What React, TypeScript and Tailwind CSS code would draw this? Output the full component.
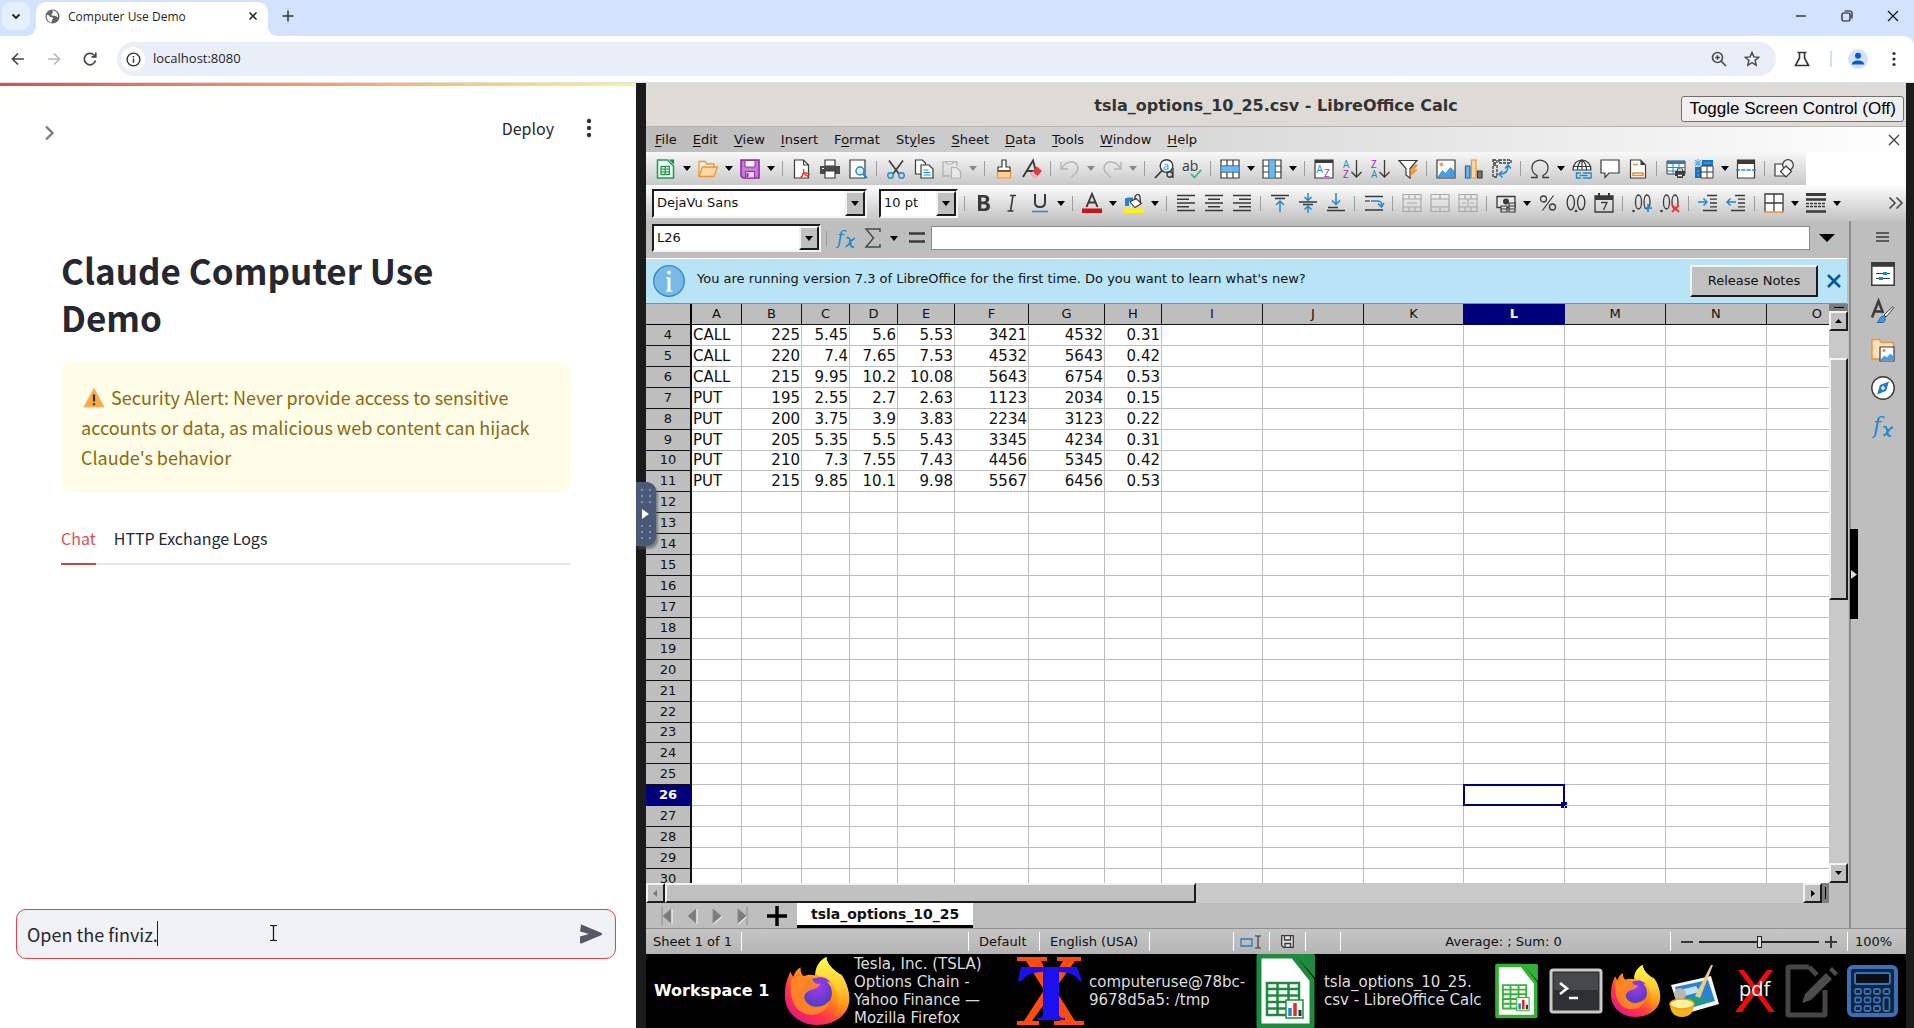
import { Fragment, type ReactNode } from 'react';

const INK = '#3a3a38';
const BLUE = '#1e8bcd';
const GREY = '#a9a9a9';

interface IconProps {
  children: ReactNode;
  size?: string;
  box?: string;
}

function Icon({ children, size = 'size-5', box = '0 0 20 20' }: IconProps) {
  return (
    <svg viewBox={box} className={`${size} shrink-0 overflow-visible`} fill="none" aria-hidden="true">
      {children}
    </svg>
  );
}

function Glyph({ x, y, size, color, children, italic, serif }: {
  x: number; y: number; size: number; color: string; children: string; italic?: boolean; serif?: boolean;
}) {
  return (
    <text
      x={x}
      y={y}
      fontSize={size}
      fill={color}
      fontStyle={italic ? 'italic' : 'normal'}
      fontFamily={serif ? 'DejaVu Serif, Liberation Serif, serif' : 'Open Sans, sans-serif'}
    >
      {children}
    </text>
  );
}

/* ---------- Toolbar icons ---------- */

const icons: Record<string, ReactNode> = {
  New: (
    <>
      <path d="M1.5 1h10l6 6v12h-16z" fill="#fff" stroke="#1e9e48" strokeWidth="1.6" />
      <path d="M13 .5h5v5z" fill="#178a3c" />
      <path d="M5 7.500h8.500v8H5zM5 10.200h8.500M5 12.800h8.500M9.200 7.500v8" stroke="#1e9e48" strokeWidth="1.300" />
    </>
  ),
  Open: (
    <>
      <path d="M1 17V2.500h6l2 2.500h7v3" fill="#fff3dc" stroke="#e8973a" strokeWidth="1.300" />
      <path d="M1 17.500 4.500 8h15L16 17.500z" fill="#fbd9a0" stroke="#e8973a" strokeWidth="1.300" />
    </>
  ),
  Save: (
    <>
      <path d="M1 1h18v18H3l-2-2z" fill="#c77bd6" stroke="#8f2da8" strokeWidth="1.600" />
      <path d="M5 1.500h10V8H5z" fill="#fff" stroke="#8f2da8" />
      <path d="M5.500 12.500h9V19h-9z" fill="#e9d2ee" stroke="#8f2da8" />
      <path d="M7.500 14v4" stroke="#8f2da8" strokeWidth="2" />
    </>
  ),
  'Export as PDF': (
    <>
      <path d="M2.500 1h9l5 5v13h-14z" fill="#fff" stroke={INK} strokeWidth="1.200" />
      <path d="M11.500 1v5h5" stroke={INK} />
      <path d="M8 19c3-2 4-6 3.500-9M10 15c2-1 5-1.500 8 .5M11.500 13c1 2 3 4 5 4.500" stroke="#e0403c" strokeWidth="1.500" />
    </>
  ),
  Print: (
    <>
      <path d="M5 1h10v6H5z" fill="#fff" stroke={INK} strokeWidth="1.200" />
      <path d="M0 7h20v8H0z" fill="#4a4a48" />
      <path d="M5 12h10v7H5z" fill="#fff" stroke={INK} strokeWidth="1.200" />
      <path d="M2 9.500h2" stroke="#fff" />
    </>
  ),
  'Print Preview': (
    <>
      <path d="M2 1h15v18H2z" fill="#fff" stroke={INK} strokeWidth="1.200" />
      <circle cx="12" cy="12" r="4" fill="#d9eefa" stroke={BLUE} strokeWidth="1.500" />
      <path d="m15 15 4 4" stroke={BLUE} strokeWidth="1.800" />
    </>
  ),
  Cut: (
    <>
      <path d="M3 1.500 13 15M17 1.500 7 15" stroke={INK} strokeWidth="1.600" />
      <circle cx="4.500" cy="16.500" r="2.700" stroke={BLUE} strokeWidth="1.400" />
      <circle cx="15.500" cy="16.500" r="2.700" stroke={BLUE} strokeWidth="1.400" />
    </>
  ),
  Copy: (
    <>
      <path d="M1.500 1h7l3 3v11h-10z" fill="#fff" stroke={INK} strokeWidth="1.200" />
      <path d="M7 6h8l4 4v9H7z" fill="#fff" stroke={INK} strokeWidth="1.200" />
      <path d="M9.500 11h5M9.500 13.500h7M9.500 16h7" stroke={BLUE} strokeWidth="1.200" />
    </>
  ),
  Paste: (
    <>
      <path d="M8 17H1V3h3M11 3h4v4" stroke="#b3b3b3" strokeWidth="1.300" />
      <path d="M4.500 5V2.500h6V5z" stroke="#b3b3b3" />
      <path d="M9.500 8.500h5l4 4V19h-9z" fill="#e9e9e9" stroke="#b3b3b3" strokeWidth="1.200" />
    </>
  ),
  'Clone Formatting': (
    <>
      <path d="M8 1h4v7h4v4H4V8h4z" fill="#fff" stroke={INK} strokeWidth="1.200" />
      <path d="M3.500 12h13v7h-13z" fill="#f9d08d" stroke="#e8973a" strokeWidth="1.200" />
      <path d="M3.500 12h13" stroke={INK} strokeWidth="1.400" />
    </>
  ),
  'Clear Formatting': (
    <>
      <path d="M1 18 11 1.500l2.500 9M5 12h8" stroke={INK} strokeWidth="1.900" />
      <path d="m8 15 7-7.500 5 4.500-6.500 7z" fill="#e5383b" />
      <path d="m8 15 2.500-2.500 5 4.500-2 2z" fill="#f6b7b8" />
    </>
  ),
  Undo: <path d="M1 3v7h7M1.500 9.500C4 5 8 2.500 12.500 3c5 .6 7 6 4 10l-5 5.500" stroke="#b5b5b5" strokeWidth="1.400" />,
  Redo: <path d="M19 3v7h-7M18.500 9.500C16 5 12 2.500 7.500 3c-5 .6-7 6-4 10l5 5.500" stroke="#b5b5b5" strokeWidth="1.400" />,
  'Find and Replace': (
    <>
      <circle cx="12.500" cy="7" r="6.300" fill="#f7fbfe" stroke={INK} strokeWidth="1.400" />
      <path d="M8 11.500 1 19" stroke={INK} strokeWidth="1.800" />
      <Glyph x={9} y={10.5} size={11} color={BLUE}>a</Glyph>
      <path d="M13 15.500a2.500 2.500 0 1 0 5.500 0 2.500 2.500 0 0 0-5.500 0M19 9v10" stroke={INK} strokeWidth="1.300" />
    </>
  ),
  Spelling: (
    <>
      <Glyph x={0} y={12} size={14} color={INK}>ab</Glyph>
      <path d="m9 15 3.500 3.500L19 11" stroke="#3cb371" strokeWidth="1.700" />
    </>
  ),
  Row: (
    <>
      <path d="M1 1h18v18H1z" fill="#fff" />
      <path d="M1 1h18v18H1zM7 1v18M13 1v18M1 7h18M1 13h18" stroke={INK} strokeWidth="1.200" />
      <path d="M1 7h18v6H1z" fill="#6fb6ea" stroke={BLUE} strokeWidth=".6" />
    </>
  ),
  Column: (
    <>
      <path d="M1 1h18v18H1z" fill="#fff" />
      <path d="M1 1h18v18H1zM7 1v18M13 1v18M1 7h18M1 13h18" stroke={INK} strokeWidth="1.200" />
      <path d="M7 1h6v18H7z" fill="#6fb6ea" stroke={BLUE} strokeWidth=".6" />
    </>
  ),
  Sort: (
    <>
      <path d="M1 1h18v18H1z" fill="#fff" stroke={INK} strokeWidth="1.200" />
      <path d="M1 1h18v3H1z" fill={INK} />
      <Glyph x={2.5} y={14} size={10} color={BLUE}>A</Glyph>
      <Glyph x={10} y={17.5} size={10} color="#a62bb8">Z</Glyph>
    </>
  ),
  'Sort Ascending': (
    <>
      <Glyph x={1} y={8.5} size={10} color={BLUE}>A</Glyph>
      <Glyph x={1} y={19} size={10} color="#a62bb8">Z</Glyph>
      <path d="M14.500 1v17M9.500 13l5 5 5-5" stroke={INK} strokeWidth="1.300" />
    </>
  ),
  'Sort Descending': (
    <>
      <Glyph x={1} y={8.5} size={10} color="#a62bb8">Z</Glyph>
      <Glyph x={1} y={19} size={10} color={BLUE}>A</Glyph>
      <path d="M14.500 1v17M9.500 13l5 5 5-5" stroke={INK} strokeWidth="1.300" />
    </>
  ),
  AutoFilter: (
    <>
      <path d="M1 1.500h18l-7 8V19l-4-3V9.500z" fill="#fff" stroke={INK} strokeWidth="1.200" />
      <path d="m17 6-6 6h3l-3 6 8-7h-3.500l4-5z" fill="#f6a13c" stroke="#e07b18" strokeWidth=".6" />
    </>
  ),
  'Insert Image': (
    <>
      <path d="M1 1h18v18H1z" fill="#fff" stroke={INK} strokeWidth="1.200" />
      <circle cx="5.500" cy="5.500" r="2" fill="#f2a44a" />
      <path d="m1.500 18.500 5-7 3 3 5-6 4 4v6z" fill="#4a9ee0" stroke={BLUE} strokeWidth=".7" />
    </>
  ),
  'Insert Chart': (
    <>
      <path d="M1.500 7h4.500v12H1.500z" fill="#6fb4e8" stroke="#1565a8" strokeWidth="1.200" />
      <path d="M7.500 1H12v18H7.500z" fill="#fbd9a0" stroke="#e8973a" strokeWidth="1.200" />
      <path d="M13.500 12H18v7h-4.500z" fill="#777" stroke={INK} strokeWidth="1.200" />
    </>
  ),
  'Pivot Table': (
    <>
      <path d="M1 1h4v3H1zM7 1h12v3H7zM1 6h4v12H1z" stroke={INK} strokeDasharray="3 1" strokeWidth="1.300" />
      <path d="M8 15c5 0 8-3 8-8M13 9.500 16 6l3 3.500M10.500 12 7 15l3.500 3.500" stroke={BLUE} strokeWidth="1.500" />
    </>
  ),
  'Special Character': (
    <path d="M1 18.500h6v-2C1 13.500.5 6 5 2.800c3-2.100 7-2.100 10 0 4.500 3.200 4 10.700-2 13.700v2h6" stroke={INK} strokeWidth="1.300" />
  ),
  Hyperlink: (
    <>
      <path d="M1 11C1 5 5 1 10 1s9 4 9 10zM10 1v10M1.500 7.500h17M10 1c-3 2-4.500 6-4.500 10M10 1c3 2 4.500 6 4.500 10" fill="#fff" stroke={INK} strokeWidth="1.200" />
      <path d="M9 14H4.500v5H9M11 14h8v5h-8M7.500 16.500h8" stroke={BLUE} strokeWidth="1.400" />
    </>
  ),
  Comment: <path d="M1 1h18v13H9l-4 4.500V14H1z" fill="#fff" stroke={INK} strokeWidth="1.200" />,
  'Headers and Footers': (
    <>
      <path d="M2.500 1h10l5 5v13h-15z" fill="#fff" stroke={INK} strokeWidth="1.200" />
      <path d="M12.500 1v5h5z" fill={INK} />
      <path d="M5 5.500h5M5 14h10v2.500H5z" stroke="#ec8a2c" strokeWidth="1.500" />
    </>
  ),
  'Define Print Area': (
    <>
      <path d="M1 2h18v13H1z" fill="#fff" stroke={INK} />
      <path d="M1 2h18v3H1z" fill="#2a7fc4" />
      <path d="M1 8.500h18M1 12h18M7 5v10M13 5v10" stroke={BLUE} />
      <path d="M11 9.500h6v2.500h2v5h-2v2h-6v-2H9v-5h2z" fill="#3f3f3d" />
      <path d="M12 11h4M12 16.500h4" stroke="#fff" strokeWidth="1.600" />
    </>
  ),
  'Freeze Rows and Columns': (
    <>
      <path d="M7 7h12v12H7z" fill="#fff" />
      <path d="M8 1h11v6H8zM1 8h6v11H1z" fill="#1673c4" />
      <path d="M7 7h12v12H7zM13 7v12M7 13h12" stroke={INK} />
      <path d="M4 0v8M0 4h8M1 1l6 6M7 1 1 7M10 4h7M3 12h2M3 16h2" stroke="#5ab0ea" strokeWidth="1.100" />
    </>
  ),
  'Split Window': (
    <>
      <path d="M1.500 1h17v18h-17z" fill="#fff" stroke={INK} strokeWidth="1.200" />
      <path d="M1.500 1h17v4h-17z" fill={INK} />
      <path d="M0 11h20" stroke={BLUE} strokeWidth="1.600" strokeDasharray="4 1.300" />
    </>
  ),
  'Draw Functions': (
    <>
      <path d="M1 5h11v12H1z" fill="#fff" stroke={INK} strokeWidth="1.200" />
      <circle cx="14" cy="6" r="5.300" fill="#f0f0f0" stroke={INK} strokeWidth="1.200" />
      <path d="m12 7 5.500 5.500-5.500 5.500-5.500-5.500z" fill="#fff" stroke={INK} strokeWidth="1.200" />
    </>
  ),
  Bold: <path d="M4 2h6c3.200 0 5.200 1.400 5.200 4 0 2-1 3.200-2.800 3.600 2.400.4 3.600 1.700 3.600 3.900 0 3-2.300 4.500-5.800 4.500H4z M7.300 4.600v4h2.400c1.500 0 2.200-.7 2.200-2s-.8-2-2.200-2zM7.300 11.200v4.200H10c1.600 0 2.500-.8 2.500-2.100 0-1.400-.9-2.100-2.500-2.100z" fill={INK} fillRule="evenodd" />,
  Italic: <path d="M8 2.500h6M5.500 18h6M11 2.500 8.500 18" stroke={INK} strokeWidth="1.600" />,
  Underline: (
    <>
      <path d="M5 1v8.500c0 3 1.800 4.500 5 4.500s5-1.500 5-4.500V1" stroke={INK} strokeWidth="2" />
      <path d="M2 18.500h16" stroke={BLUE} strokeWidth="1.500" />
    </>
  ),
  'Font Color': (
    <>
      <path d="M4.500 14 10 1l5.500 13M6.500 9.500h7" stroke={INK} strokeWidth="1.900" />
      <path d="M0 15.500h20V20H0z" fill="#c9141b" />
    </>
  ),
  'Background Color': (
    <>
      <path d="M0 15.500h20V20H0z" fill="#fdf30a" />
      <path d="M1 13V5.500c2-1.500 5-1 8-1V8H5v5z" fill="#2b7fd0" />
      <path d="m6 9 6-3.500 5.500 5-6.500 4z" fill="#fff" stroke={INK} strokeWidth="1.100" />
      <path d="M11 7c-1-5 4-8 5-3l.5 6.500" stroke={INK} strokeWidth="1.300" />
    </>
  ),
  'Align Left': <path d="M1 2.500h18M1 6.200h12M1 10h18M1 13.800h12M1 17.500h18" stroke={INK} strokeWidth="1.400" />,
  'Align Center': <path d="M1 2.500h18M4 6.200h12M1 10h18M4 13.800h12M1 17.500h18" stroke={INK} strokeWidth="1.400" />,
  'Align Right': <path d="M1 2.500h18M7 6.200h12M1 10h18M7 13.800h12M1 17.500h18" stroke={INK} strokeWidth="1.400" />,
  'Align Top': (
    <>
      <path d="M1 2.500h18M5 5.500h10" stroke={INK} strokeWidth="1.500" />
      <path d="M10 19V8M6 12l4-4 4 4" stroke={BLUE} strokeWidth="1.500" />
    </>
  ),
  'Center Vertically': (
    <>
      <path d="M1 9h18M5 11.500h10" stroke={INK} strokeWidth="1.500" />
      <path d="M10 0v7M6.500 4l3.500 3.500L13.500 4M10 20v-6.500M6.500 16.500 10 13l3.500 3.500" stroke={BLUE} strokeWidth="1.500" />
    </>
  ),
  'Align Bottom': (
    <>
      <path d="M2 14.500h10M1 17.500h18" stroke={INK} strokeWidth="1.500" />
      <path d="M10 0v11M6 7.500l4 4 4-4" stroke={BLUE} strokeWidth="1.500" />
    </>
  ),
  'Wrap Text': (
    <>
      <path d="M1 3.500h18M1 17h18" stroke={INK} strokeWidth="1.400" />
      <path d="M1 8h5" stroke={INK} strokeWidth="1.200" />
      <path d="M7 8h7c3 0 4 2 3.500 5M14 10.500l3.500 3.500L20 10" stroke={BLUE} strokeWidth="1.500" />
    </>
  ),
  'Merge and Center': <path d="M1 1.500h18v17H1zM1 6h18M1 14h18M7 1.500V6M13 1.500V6M7 14v4.500M13 14v4.500M5 10h10" stroke={GREY} strokeWidth="1.200" />,
  'Merge Cells': <path d="M1 1.500h18v17H1zM1 6h18M1 14h18M10 1.500V6M10 14v4.500" stroke={GREY} strokeWidth="1.200" />,
  'Split Cells': <path d="M1 1.500h18v17H1zM1 6h18M1 14h18M7 1.500V6M13 1.500V6M7 14v4.500M13 14v4.500M10 6v8M4 10h4M12 10h4" stroke={GREY} strokeWidth="1.200" />,
  'Format as Currency': (
    <>
      <path d="M1 3.500h18v11H1z" fill="#e9e9e9" stroke={INK} strokeWidth="1.300" />
      <circle cx="10" cy="8.500" r="3" fill={INK} />
      <path d="M5 13h6v6H5zM13 10h6v9h-6z" fill="#ddd" stroke={INK} strokeWidth="1.200" />
      <path d="M5 16h6M13 13h6M13 16h6" stroke={INK} strokeWidth="1.200" />
    </>
  ),
  'Format as Percent': (
    <>
      <circle cx="5.500" cy="6" r="3" stroke={INK} strokeWidth="1.300" />
      <circle cx="14.500" cy="14" r="3" stroke={INK} strokeWidth="1.300" />
      <path d="M15.500 2.500 4.500 17.500" stroke={INK} strokeWidth="1.200" />
    </>
  ),
  'Format as Number': (
    <>
      <ellipse cx="4.800" cy="9.500" rx="3.600" ry="7.300" stroke={INK} strokeWidth="1.300" />
      <ellipse cx="15.200" cy="9.500" rx="3.600" ry="7.300" stroke={INK} strokeWidth="1.300" />
      <circle cx="10" cy="18" r="1.300" fill={INK} />
    </>
  ),
  'Format as Date': (
    <>
      <path d="M1 3h18v16H1z" stroke={INK} strokeWidth="1.300" />
      <path d="M1 3h18v4H1zM4 0h2v4H4zM14 0h2v4h-2z" fill={INK} />
      <path d="M7 9.500h6L9.500 17" stroke={INK} strokeWidth="1.300" />
    </>
  ),
  'Add Decimal Place': (
    <>
      <ellipse cx="6.500" cy="9" rx="3" ry="7" stroke={INK} strokeWidth="1.300" />
      <ellipse cx="15" cy="9" rx="3" ry="7" stroke={INK} strokeWidth="1.300" />
      <circle cx="1.500" cy="18" r="1.300" fill={INK} />
      <path d="M16 11v8M12 15h8" stroke={BLUE} strokeWidth="1.600" />
    </>
  ),
  'Delete Decimal Place': (
    <>
      <ellipse cx="6.500" cy="9" rx="3" ry="7" stroke={INK} strokeWidth="1.300" />
      <ellipse cx="15" cy="9" rx="3" ry="7" stroke={INK} strokeWidth="1.300" />
      <circle cx="1.500" cy="18" r="1.300" fill={INK} />
      <path d="m12 12 7 7M19 12l-7 7" stroke="#e5383b" strokeWidth="1.800" />
    </>
  ),
  'Increase Indent': (
    <>
      <path d="M9 2.500h10M12 6.200h7M12 10h7M12 13.800h7M5 17.500h14" stroke={INK} strokeWidth="1.300" />
      <path d="M0 9h9M5.500 5.500 9 9l-3.500 3.500" stroke={BLUE} strokeWidth="1.500" />
    </>
  ),
  'Decrease Indent': (
    <>
      <path d="M9 2.500h10M12 6.200h7M12 10h7M12 13.800h7M5 17.500h14" stroke={INK} strokeWidth="1.300" />
      <path d="M10 9H1M4.500 5.500 1 9l3.500 3.500" stroke={BLUE} strokeWidth="1.500" />
    </>
  ),
  Borders: (
    <>
      <path d="M1 1h18v18H1z" fill="#fff" />
      <path d="M1 19V1h18v18M10 1v18M1 10h18" stroke={INK} strokeWidth="1.300" />
      <path d="M0 19h20" stroke="#e8973a" strokeWidth="1.600" />
    </>
  ),
  'Border Style': (
    <>
      <path d="M0 1.500h20" stroke={INK} strokeWidth="3" />
      <path d="M0 6.500h20M0 18.500h20" stroke={INK} strokeWidth="2.500" />
      <path d="M0 10.500h20M0 13.500h20" stroke={INK} strokeWidth="1.300" strokeDasharray="3 1" />
    </>
  ),
};

// "v" drops a menu arrow after an icon ("v-" when greyed out), "|" is a divider
const standardBar = [
  'New', 'v', 'Open', 'v', 'Save', 'v', '|', 'Export as PDF', 'Print', 'Print Preview', '|', 'Cut', 'Copy', 'Paste', 'v-',
  '|', 'Clone Formatting', 'Clear Formatting', '|', 'Undo', 'v-', 'Redo', 'v-', '|', 'Find and Replace', 'Spelling', '|',
  'Row', 'v', 'Column', 'v', '|', 'Sort', 'Sort Ascending', 'Sort Descending', 'AutoFilter', '|', 'Insert Image',
  'Insert Chart', 'Pivot Table', '|', 'Special Character', 'v', 'Hyperlink', 'Comment', 'Headers and Footers', '|',
  'Define Print Area', 'Freeze Rows and Columns', 'v', 'Split Window', '|', 'Draw Functions',
];

const formattingBar = [
  '|', 'Bold', 'Italic', 'Underline', 'v', '|', 'Font Color', 'v', 'Background Color', 'v', '|', 'Align Left',
  'Align Center', 'Align Right', '|', 'Align Top', 'Center Vertically', 'Align Bottom', '|', 'Wrap Text', '|',
  'Merge and Center', 'Merge Cells', 'Split Cells', '|', 'Format as Currency', 'v', 'Format as Percent',
  'Format as Number', 'Format as Date', '|', 'Add Decimal Place', 'Delete Decimal Place', '|', 'Increase Indent',
  'Decrease Indent', '|', 'Borders', 'v', 'Border Style', 'v',
];

function Arrow({ color = '#000' }: { color?: string }) {
  return (
    <Icon size="w-2 h-[5px]" box="0 0 8 5">
      <path d="M0 0h8L4 5z" fill={color} />
    </Icon>
  );
}

function ToolItems({ items }: { items: string[] }) {
  return (
    <>
      {items.map((item, i) => (
        <Fragment key={i}>
          {item === '|' ? (
            <span className="flex w-[10px] shrink-0 justify-center">
              <span className="h-[15px] w-px bg-[#9c9c9c]" />
            </span>
          ) : item === 'v' || item === 'v-' ? (
            <button aria-label="More options" className="flex h-5 w-[14px] shrink-0 items-center justify-center">
              <Arrow color={item === 'v' ? '#000' : '#8a8a8a'} />
            </button>
          ) : (
            <button aria-label={item} title={item} className="flex w-7 shrink-0 justify-center">
              <Icon>{icons[item]}</Icon>
            </button>
          )}
        </Fragment>
      ))}
    </>
  );
}

/* ---------- Browser chrome ---------- */

function BrowserChrome() {
  return (
    <header className="shrink-0 border-b border-[#dcdfe3] bg-[#d3e3fd] font-['Open_Sans',sans-serif] text-[#1f1f1f]">
      <div className="flex h-9 items-start pl-[2px] pt-[2px]">
        <button aria-label="Search tabs" className="flex h-7 w-7 items-center justify-center rounded-[9px] bg-[#e6effd]">
          <Icon size="size-3" box="0 0 12 12">
            <path d="m2.500 4.500 3.500 3.500 3.500-3.500" stroke="#1f1f1f" strokeWidth="1.800" />
          </Icon>
        </button>
        <div className="relative ml-[6px] flex h-[34px] w-[232px] items-center rounded-t-[10px] bg-white pb-[6px] pl-[9px] pr-[11px]">
          <svg viewBox="0 0 10 10" className="absolute -left-[10px] bottom-0 size-[10px]" aria-hidden="true">
            <path d="M10 0v10H0c6 0 10-4 10-10" fill="#fff" />
          </svg>
          <svg viewBox="0 0 10 10" className="absolute -right-[10px] bottom-0 size-[10px]" aria-hidden="true">
            <path d="M0 0v10h10C4 10 0 6 0 0" fill="#fff" />
          </svg>
          <Icon size="size-[15px]" box="0 0 16 16">
            <circle cx="8" cy="8" r="7.500" fill="#5f6368" />
            <path d="M2 6c2 0 3 1 3.500 2.500L8 9c1 .5 1 2-.5 2.500L7 14.500C3.500 14 1.200 10 2 6M7 1.800c1.500.7 2 1.700 1 2.700L6.500 6 8 7.200h3L13.800 9C14.500 5 12 1.800 8 1.500z" fill="#fff" />
          </Icon>
          <span className="ml-2 flex-1 pt-px text-xs">Computer Use Demo</span>
          <button aria-label="Close tab">
            <Icon size="size-2" box="0 0 8 8">
              <path d="m.5.5 7 7M7.500.5l-7 7" stroke="#1f1f1f" strokeWidth="1.500" />
            </Icon>
          </button>
        </div>
        <button aria-label="New tab" className="ml-[14px] flex h-7 items-center">
          <Icon size="size-3" box="0 0 12 12">
            <path d="M6 .5v11M.5 6h11" stroke="#333" strokeWidth="1.500" />
          </Icon>
        </button>
        <div className="ml-auto flex h-7 items-center gap-[34px] pr-[15px]">
          <button aria-label="Minimize">
            <Icon size="size-3" box="0 0 12 12">
              <path d="M1 6h10" stroke="#111" strokeWidth="1.200" />
            </Icon>
          </button>
          <button aria-label="Restore">
            <Icon size="size-3" box="0 0 12 12">
              <rect x="1" y="3" width="8" height="8" rx="1.500" stroke="#111" strokeWidth="1.200" />
              <path d="M3.500 1h5.500a2 2 0 0 1 2 2v5.500" stroke="#111" strokeWidth="1.200" />
            </Icon>
          </button>
          <button aria-label="Close window">
            <Icon size="size-3" box="0 0 12 12">
              <path d="m1 1 10 10M11 1 1 11" stroke="#111" strokeWidth="1.200" />
            </Icon>
          </button>
        </div>
      </div>
      <div className="flex h-[46px] items-center rounded-tr-[10px] bg-white pl-[10px] pr-[18px]">
        <button aria-label="Back" className="mr-5">
          <Icon size="size-4" box="0 0 16 16">
            <path d="M8 2.500 2.500 8 8 13.500M2.500 8H14" stroke="#474747" strokeWidth="1.700" />
          </Icon>
        </button>
        <button aria-label="Forward" className="mr-5">
          <Icon size="size-4" box="0 0 16 16">
            <path d="m8 2.500 5.500 5.500L8 13.500M13.500 8H2" stroke="#b9b9b9" strokeWidth="1.700" />
          </Icon>
        </button>
        <button aria-label="Reload" className="mr-[19px]">
          <Icon size="size-4" box="0 0 16 16">
            <path d="M13.500 9.500A5.700 5.700 0 1 1 12 4l1.500 1.500M13.800 1.500v4.300H9.500" stroke="#474747" strokeWidth="1.700" />
          </Icon>
        </button>
        <div className="flex h-[34px] flex-1 items-center rounded-full bg-[#e9eef9] pl-1 pr-4">
          <span className="flex size-6 items-center justify-center rounded-full bg-white">
            <Icon size="size-[15px]" box="0 0 16 16">
              <circle cx="8" cy="8" r="6.800" stroke="#333" strokeWidth="1.500" />
              <path d="M8 7v4.500M8 4.200v1.600" stroke="#333" strokeWidth="1.500" />
            </Icon>
          </span>
          <input aria-label="Address" defaultValue="localhost:8080" className="ml-2 flex-1 bg-transparent text-[13px] outline-none" />
          <button aria-label="Zoom" className="mr-[17px]">
            <Icon size="size-4" box="0 0 16 16">
              <circle cx="6.500" cy="6.500" r="5" stroke="#474747" strokeWidth="1.600" />
              <path d="M10 10l5 5M6.500 4.200v4.600M4.200 6.500h4.600" stroke="#474747" strokeWidth="1.600" />
            </Icon>
          </button>
          <button aria-label="Bookmark this page">
            <Icon size="size-4" box="0 0 16 16">
              <path d="m8 1.500 1.900 4.400 4.800.4-3.600 3.200 1.100 4.700L8 11.700l-4.200 2.500 1.100-4.700L1.300 6.300l4.800-.4z" stroke="#474747" strokeWidth="1.400" />
            </Icon>
          </button>
        </div>
        <button aria-label="Labs" className="ml-[18px]">
          <Icon size="size-4" box="0 0 16 16">
            <path d="M3.500 1.500h9M5.500 1.500V7l-4 7.500h13l-4-7.500V1.500" stroke="#333" strokeWidth="1.600" />
          </Icon>
        </button>
        <span className="ml-5 h-4 w-[2px] bg-[#cfe0fc]" />
        <button aria-label="Profile" className="ml-4">
          <Icon size="size-5" box="0 0 20 20">
            <circle cx="10" cy="10" r="10" fill="#d3e3fd" />
            <circle cx="10" cy="6.800" r="3" fill="#0b57d0" />
            <path d="M4 15.500c0-3 2.500-4 6-4s6 1 6 4z" fill="#0b57d0" />
          </Icon>
        </button>
        <button aria-label="Browser menu" className="ml-6">
          <Icon size="w-1 h-4" box="0 0 4 16">
            <circle cx="2" cy="2.500" r="1.600" fill="#333" />
            <circle cx="2" cy="8" r="1.600" fill="#333" />
            <circle cx="2" cy="13.500" r="1.600" fill="#333" />
          </Icon>
        </button>
      </div>
    </header>
  );
}

/* ---------- Chat pane ---------- */

function ChatPane() {
  return (
    <section className="flex w-[calc(33.333%-2px)] shrink-0 flex-col bg-white font-['Noto_Sans_CJK_SC',sans-serif] text-[#262730]">
      <div className="h-[3px] shrink-0 bg-linear-to-r from-[#e4484b] via-[#f3a068] to-[#fdf38b]" />
      <div className="flex h-[84px] shrink-0 items-center pl-10 pr-[37px]">
        <button aria-label="Open sidebar" className="mt-[10px]">
          <Icon size="size-[18px]" box="0 0 18 18">
            <path d="m6 2.500 6.500 6.500L6 15.500" stroke="#7d7e84" strokeWidth="2.400" />
          </Icon>
        </button>
        <button className="ml-auto text-base leading-6">Deploy</button>
        <button aria-label="Main menu" className="ml-[25px]">
          <Icon size="w-5 h-[18px]" box="0 0 20 18">
            <circle cx="10" cy="2" r="2.200" fill="#31333f" />
            <circle cx="10" cy="9" r="2.200" fill="#31333f" />
            <circle cx="10" cy="16" r="2.200" fill="#31333f" />
          </Icon>
        </button>
      </div>

      <div className="pl-[61px] pr-[65px] pt-[76px]">
        <h1 className="text-[35px] font-bold leading-[47px]">
          Claude Computer Use
          <br />
          Demo
        </h1>
        <div role="alert" className="mt-[22px] rounded-[10px] bg-[#fffce7] px-5 py-5 text-lg leading-[30px] text-[#8a6a12]">
          <Icon size="size-[22px] inline-block ml-[2px] mr-[6px] align-[-4px]" box="0 0 22 22">
            <path d="M11 1.500 21 20H1z" fill="#f9a94a" stroke="#f0b866" />
            <path d="M11 7.500v7M11 16.300v2" stroke="#3a3322" strokeWidth="2.200" />
          </Icon>
          Security Alert: Never provide access to sensitive accounts or data, as malicious web content can hijack Claude's behavior
        </div>
        <div role="tablist" className="mt-[21px] flex gap-[18px] border-b-2 border-[#e8e8ea] text-base leading-[50px]">
          <button role="tab" aria-selected="true" className="-mb-[2px] border-b-2 border-[#c0494c] text-[#e0504f]">
            Chat
          </button>
          <button role="tab" aria-selected="false">
            HTTP Exchange Logs
          </button>
        </div>
      </div>

      <div className="mt-auto px-4 pb-[69px] pr-5">
        <div className="relative flex h-[50px] items-center rounded-[10px] border border-[#d9474b] bg-[#f0f2f6] pl-[10px] pr-[12px]">
          <input
            aria-label="Type a message to send to Claude"
            defaultValue="Open the finviz."
            className="min-w-0 flex-1 bg-transparent pb-px text-lg leading-7 outline-none"
          />
          <span className="absolute left-[140px] top-[11px] h-[25px] w-px bg-[#222]" />
          <svg viewBox="0 0 9 18" className="absolute left-[252px] top-[14px] h-[18px] w-[9px]" fill="none" aria-hidden="true">
            <path d="M1 1.500h2.500l1 1 1-1H8M4.500 2v14M1 16.500h2.500l1-1 1 1H8" stroke="#111" strokeWidth="1.200" />
          </svg>
          <button aria-label="Send message">
            <Icon size="w-6 h-5" box="0 0 24 20">
              <path d="M2 1.500C1 .6 2 .2 3 .7l19 8c1.500.7 1.500 1.900 0 2.600l-19 8c-1 .5-2 .1-2-1v-5.800L10 10 1 7.500z" fill="#565867" />
            </Icon>
          </button>
        </div>
      </div>
    </section>
  );
}

/* ---------- LibreOffice Calc ---------- */

const menus: [string, string, string][] = [
  ['', 'F', 'ile'], ['', 'E', 'dit'], ['', 'V', 'iew'], ['', 'I', 'nsert'], ['F', 'o', 'rmat'], ['St', 'y', 'les'],
  ['', 'S', 'heet'], ['', 'D', 'ata'], ['', 'T', 'ools'], ['', 'W', 'indow'], ['', 'H', 'elp'],
];

const columns = [
  { name: 'A', width: 'w-[50px]' },
  { name: 'B', width: 'w-[60px]' },
  { name: 'C', width: 'w-[48px]' },
  { name: 'D', width: 'w-[48px]' },
  { name: 'E', width: 'w-[57px]' },
  { name: 'F', width: 'w-[74px]' },
  { name: 'G', width: 'w-[76px]' },
  { name: 'H', width: 'w-[57px]' },
  { name: 'I', width: 'w-[101px]' },
  { name: 'J', width: 'w-[101px]' },
  { name: 'K', width: 'w-[100px]' },
  { name: 'L', width: 'w-[101px]' },
  { name: 'M', width: 'w-[101px]' },
  { name: 'N', width: 'w-[101px]' },
  { name: 'O', width: 'w-[101px]' },
];

const FIRST_ROW = 4;
const LAST_ROW = 30;

const cells: Record<number, string[]> = {
  4: ['CALL', '225', '5.45', '5.6', '5.53', '3421', '4532', '0.31'],
  5: ['CALL', '220', '7.4', '7.65', '7.53', '4532', '5643', '0.42'],
  6: ['CALL', '215', '9.95', '10.2', '10.08', '5643', '6754', '0.53'],
  7: ['PUT', '195', '2.55', '2.7', '2.63', '1123', '2034', '0.15'],
  8: ['PUT', '200', '3.75', '3.9', '3.83', '2234', '3123', '0.22'],
  9: ['PUT', '205', '5.35', '5.5', '5.43', '3345', '4234', '0.31'],
  10: ['PUT', '210', '7.3', '7.55', '7.43', '4456', '5345', '0.42'],
  11: ['PUT', '215', '9.85', '10.1', '9.98', '5567', '6456', '0.53'],
};

const raised = 'border-2 border-t-[#f2f2f2] border-l-[#f2f2f2] border-r-[#1c1c1c] border-b-[#1c1c1c] bg-[#c0c0c0]';
const sunken = 'border-2 border-t-[#1c1c1c] border-l-[#1c1c1c] border-r-[#f4f4f4] border-b-[#f4f4f4] bg-white';

function ComboArrow() {
  return (
    <span className={`flex w-5 shrink-0 items-center justify-center ${raised}`}>
      <Arrow />
    </span>
  );
}

function Sheet() {
  const rows = Array.from({ length: LAST_ROW - FIRST_ROW + 1 }, (_, i) => FIRST_ROW + i);

  return (
    <div className="h-[579px] min-h-0 flex-1 overflow-hidden bg-white">
      <table className="h-[586px] w-[1222px] table-fixed border-separate border-spacing-0 text-[15px] leading-[18px] text-[#111]">
        <colgroup>
          <col className="w-[46px]" />
          {columns.map((col) => (
            <col key={col.name} className={col.width} />
          ))}
        </colgroup>
        <thead className="text-[13px]">
          <tr className="h-[21px]">
            <td className="border-b border-r-2 border-black bg-[#bebebe] p-0" />
            {columns.map((col) => (
              <th
                key={col.name}
                scope="col"
                className={
                  col.name === 'L'
                    ? 'border-b border-r border-[#00007a] bg-[#00007a] p-0 font-bold text-white'
                    : 'border-b border-r border-[#111] bg-[#bebebe] p-0 font-normal'
                }
              >
                {col.name}
              </th>
            ))}
          </tr>
        </thead>
        <tbody>
          {rows.map((row) => (
            <tr key={row} className="h-5">
              <th
                scope="row"
                className={
                  row === 26
                    ? 'border-b border-r-2 border-[#00007a] bg-[#00007a] p-0 text-[13px] font-bold text-white'
                    : 'border-b border-r-2 border-[#111] bg-[#bebebe] p-0 text-[13px] font-normal'
                }
              >
                {row}
              </th>
              {columns.map((col, c) => {
                const value = cells[row]?.[c];
                const selected = row === 26 && col.name === 'L';
                return (
                  <td
                    key={col.name}
                    className={`relative border-b border-r border-[#bdbdbd] px-px py-0 ${c === 0 ? 'text-left' : 'text-right'}`}
                  >
                    {value}
                    {selected && (
                      <span className="absolute -bottom-px -left-px -right-px -top-px border-2 border-[#00007a]">
                        <span className="absolute -bottom-1 -right-1 size-[6px] bg-[#00007a]" />
                      </span>
                    )}
                  </td>
                );
              })}
            </tr>
          ))}
        </tbody>
      </table>
    </div>
  );
}

function Calc() {
  return (
    <div className="flex min-h-0 flex-1 flex-col bg-[#bebebe] font-['DejaVu_Sans',sans-serif] text-[13px] text-[#111]">
      <div className="relative flex h-[44px] shrink-0 items-center justify-center border-b border-[#b5b3b0] bg-[#dedbd7] pt-[2px] text-base font-bold text-[#333]">
        tsla_options_10_25.csv - LibreOffice Calc
        <button className="absolute right-[2px] top-[13px] h-[26px] rounded-[3px] border border-[#6f6f6f] bg-[#efefef] px-[7px] font-['Liberation_Sans',sans-serif] text-[17px] font-normal leading-6 text-black">
          Toggle Screen Control (Off)
        </button>
      </div>

      <nav className="flex h-[25px] shrink-0 items-center gap-4 bg-linear-to-r from-[#bcbcbc] to-white pl-[9px] pr-[7px]">
        {menus.map(([before, key, after]) => (
          <button key={before + key + after}>
            {before}
            <span className="underline underline-offset-2">{key}</span>
            {after}
          </button>
        ))}
        <button aria-label="Close document" className="ml-auto">
          <Icon size="size-[10px]" box="0 0 10 10">
            <path d="m0 0 10 10M10 0 0 10" stroke="#444" strokeWidth="1.400" />
          </Icon>
        </button>
      </nav>

      <div className="flex h-[33px] shrink-0 bg-white">
        <div className="flex items-center bg-linear-to-b from-[#f8f8f8] to-[#c9c9c9] pl-[6px] pr-2">
          <ToolItems items={standardBar} />
        </div>
      </div>

      <div className="flex h-9 shrink-0 items-center overflow-hidden bg-linear-to-b from-[#fdfdfd] to-[#c3c3c3] pl-[6px]">
        <div className={`flex h-[29px] w-[215px] shrink-0 ${sunken}`}>
          <select aria-label="Font Name" className="flex-1 appearance-none pl-[3px] outline-none">
            <option>DejaVu Sans</option>
          </select>
          <ComboArrow />
        </div>
        <div className={`ml-3 mr-[2px] flex h-[29px] w-[79px] shrink-0 ${sunken}`}>
          <select aria-label="Font Size" className="w-full min-w-0 flex-1 appearance-none pl-[3px] outline-none">
            <option>10 pt</option>
          </select>
          <ComboArrow />
        </div>
        <ToolItems items={formattingBar} />
        <button aria-label="More tools" className="ml-auto pr-[3px]">
          <Icon size="w-4 h-3" box="0 0 16 12">
            <path d="m2.500.5 5.500 5.500-5.500 5.500M9.500.5 15 6l-5.500 5.500" stroke="#444" strokeWidth="1.500" />
          </Icon>
        </button>
      </div>

      <div className="flex min-h-0 flex-1">
        <div className="flex min-w-0 flex-1 flex-col">
          <div className="flex h-[37px] shrink-0 items-center pb-[3px] pl-[6px] pr-[14px]">
            <div className={`flex h-7 w-[169px] shrink-0 ${sunken}`}>
              <input aria-label="Name Box" defaultValue="L26" className="min-w-0 flex-1 pl-[3px] outline-none" />
              <ComboArrow />
            </div>
            <span className="ml-[5px] h-[15px] w-px bg-[#9c9c9c]" />
            <button aria-label="Function Wizard" className="ml-[9px]">
              <Icon>
                <Glyph x={1} y={16} size={18} color={BLUE} italic serif>f</Glyph>
                <path d="M10.500 10c2-1 3 0 3.500 2.500l1 5c.3 1.500 1.500 2 3 1M19 10.300c-2 0-3.500 2-5 4.200s-2.500 4-4.500 4" stroke={BLUE} strokeWidth="1.700" />
              </Icon>
            </button>
            <button aria-label="Select Function" className="ml-[7px]">
              <Icon>
                <path d="M17 4V1H3l7.500 9L3 19h14v-3" stroke="#4a4a48" strokeWidth="1.500" />
              </Icon>
            </button>
            <button aria-label="Function list" className="ml-[7px]">
              <Arrow />
            </button>
            <button aria-label="Formula" className="ml-[11px] mr-[6px]">
              <Icon size="w-4 h-5" box="0 0 16 20">
                <path d="M0 5.500h16M0 13.500h16" stroke={INK} strokeWidth="2.300" />
              </Icon>
            </button>
            <input aria-label="Input line" className="h-6 min-w-0 flex-1 border border-[#8a8a8a] bg-white px-1 outline-none" />
            <button aria-label="Expand Formula Bar" className="ml-[9px]">
              <Icon size="w-4 h-2" box="0 0 16 8">
                <path d="M0 0h16L8 8z" fill="#000" />
              </Icon>
            </button>
          </div>

          <div className="mr-[2px] flex h-[46px] shrink-0 items-center border-b border-t border-b-[#8a8a8a] border-t-white bg-[#b9e4f6] pl-[7px] pr-[5px]">
            <Icon size="size-8" box="0 0 32 32">
              <circle cx="16" cy="16" r="15.300" fill="#7ab8e8" stroke="#2e86cf" strokeWidth="1.300" />
              <path d="M16 12.500v14" stroke="#fff" strokeWidth="3" />
              <circle cx="16" cy="7.500" r="1.900" fill="#fff" />
              <path d="M13 13h3M13 26h6.500" stroke="#fff" />
            </Icon>
            <p className="ml-[12px] pb-1">
              You are running version 7.3 of LibreOffice for the first time. Do you want to learn what's new?
            </p>
            <button className={`ml-auto h-8 w-[128px] ${raised}`}>Release Notes</button>
            <button aria-label="Close infobar" className="ml-2">
              <Icon size="size-4" box="0 0 16 16">
                <path d="m2 2 12 12M14 2 2 14" stroke="#0a5696" strokeWidth="2.600" />
              </Icon>
            </button>
          </div>

          <div className="flex min-h-0 flex-1 pr-[1px]">
            <Sheet />
            <div className="flex w-[19px] shrink-0 flex-col bg-[#c9c9c9]">
              <span className="flex h-[7px] items-center justify-center bg-[#7d7d7d]">
                <span className="h-px w-[10px] bg-black" />
              </span>
              <button aria-label="Scroll up" className={`flex h-5 items-center justify-center ${raised}`}>
                <Icon size="w-[7px] h-1" box="0 0 7 4">
                  <path d="M0 4h7L3.500 0z" fill="#000" />
                </Icon>
              </button>
              <span className={`mt-[27px] h-[242px] ${raised}`} />
              <button aria-label="Scroll down" className={`mt-auto flex h-5 items-center justify-center ${raised}`}>
                <Icon size="w-[7px] h-1" box="0 0 7 4">
                  <path d="M0 0h7L3.500 4z" fill="#000" />
                </Icon>
              </button>
            </div>
          </div>

          <div className="mr-5 flex h-5 shrink-0 bg-[#c9c9c9]">
            <button aria-label="Scroll left" className={`flex w-[19px] items-center justify-center ${raised}`}>
              <Icon size="w-1 h-[7px]" box="0 0 4 7">
                <path d="M4 0v7L0 3.500z" fill="#777" />
              </Icon>
            </button>
            <span className={`w-[531px] ${raised}`} />
            <button aria-label="Scroll right" className={`ml-auto flex w-[19px] items-center justify-center ${raised}`}>
              <Icon size="w-1 h-[7px]" box="0 0 4 7">
                <path d="M0 0v7l4-3.500z" fill="#000" />
              </Icon>
            </button>
            <span className="flex w-[7px] items-center justify-center bg-[#7d7d7d]">
              <span className="h-3 w-px bg-black" />
            </span>
          </div>

          <div className="flex h-[25px] shrink-0 items-center pl-[13px]">
            {['M3 0v18M12 2v14L4 9z', 'M12 2v14L4 9z', 'M4 2v14l8-7z', 'M4 2v14l8-7zM13 0v18'].map((d, i) => (
              <button key={i} aria-label={['First Sheet', 'Previous Sheet', 'Next Sheet', 'Last Sheet'][i]} className="mr-[9px]">
                <Icon size="w-4 h-[18px]" box="0 0 16 18">
                  <path d={d} fill="#7b7b7b" stroke="#8d8d8d" />
                  <path d={i < 2 ? 'M13 2v14.500' : 'M4.500 17 13 9.500'} stroke="#fff" />
                </Icon>
              </button>
            ))}
            <button aria-label="Add Sheet" className="ml-[7px] mr-[9px]">
              <Icon size="size-[22px]" box="0 0 22 22">
                <path d="M11 1v20M1 11h20" stroke="#000" strokeWidth="3.400" />
              </Icon>
            </button>
            <button className="h-[25px] border-b-[3px] border-black bg-white px-[14px] text-sm font-bold leading-[18px]">
              tsla_options_10_25
            </button>
          </div>
        </div>

        <aside className="relative flex w-[57px] shrink-0 flex-col items-center gap-[14px] border-l-2 border-[#8e8e8e] pl-2 pt-[11px]">
          <button aria-label="Sidebar Settings" className="mb-[6px]">
            <Icon size="w-[14px] h-[10px]" box="0 0 14 10">
              <path d="M0 1h13M0 5h13M0 9h13" stroke={INK} strokeWidth="1.300" />
            </Icon>
          </button>
          <button aria-label="Properties">
            <Icon size="size-6" box="0 0 24 24">
              <path d="M.8.800h22.400v22.400H.8z" fill="#fff" stroke={INK} strokeWidth="1.500" />
              <path d="M.8.800h22.400v4H.8z" fill={INK} />
              <path d="M5 11.500h14M5 16.500h14" stroke={INK} />
              <path d="M12 11.500h4M8 16.500h4" stroke={BLUE} strokeWidth="3" />
            </Icon>
          </button>
          <button aria-label="Styles">
            <Icon size="size-6" box="0 0 24 24">
              <path d="M1 17.500 7.500 1 12 13M3.500 11.500H11" stroke={INK} strokeWidth="2.500" />
              <path d="M23 7.500 15 17l-2-2 9-8.500z" fill="#fff" stroke={INK} />
              <path d="M6 22.500c2 0 2-6 6.500-6.500 3 1 2 6-1 6.500z" fill="#4a94dc" stroke="#1b65ae" />
            </Icon>
          </button>
          <button aria-label="Gallery">
            <Icon size="size-6" box="0 0 24 24">
              <path d="M1 21V1.500h7l2.500 3h12V9L20 21z" fill="#fde3bd" stroke="#ee8f38" strokeWidth="1.400" />
              <path d="M9 9h14v14H9z" fill="#fff" stroke={INK} strokeWidth="1.200" />
              <circle cx="13" cy="12.500" r="1.500" fill="#ee7f38" />
              <path d="m9.500 21.500 4-4 2.500 2 3.500-4 3 3v4h-13z" fill="#4a9ee0" />
            </Icon>
          </button>
          <button aria-label="Navigator">
            <Icon size="size-6" box="0 0 24 24">
              <circle cx="12" cy="12" r="11.200" fill="#fff" stroke={INK} strokeWidth="1.400" />
              <path d="m18 5.500-3 9.500-9 3.500 3-9.500z" fill="#1e7fc8" />
              <path d="m12 9.500 2 2.500-2 2.500-2-2.500z" fill="#fff" />
            </Icon>
          </button>
          <button aria-label="Functions">
            <Icon size="size-6" box="0 0 24 24">
              <Glyph x={2} y={19} size={22} color={BLUE} italic serif>f</Glyph>
              <path d="M12.500 13c2-1 3 0 3.500 2.500l1 5c.3 1.500 1.500 2 3 1M22 13.300c-2 0-3.500 2-5 4.200s-2.500 4-4.500 4" stroke={BLUE} strokeWidth="1.900" />
            </Icon>
          </button>
          <button aria-label="Hide Sidebar" className="absolute -left-px top-[308px] flex h-[90px] w-2 items-center justify-center bg-black">
            <Icon size="w-[6px] h-[9px]" box="0 0 6 9">
              <path d="M0 0v9l6-4.500z" fill="#ddd" />
            </Icon>
          </button>
        </aside>
      </div>

      <footer className="flex h-[26px] shrink-0 items-center border-t border-[#8e8e8e] bg-linear-to-b from-[#c6c6c6] to-[#b4b4b4]">
        <span className="w-[95px] pl-[7px]">Sheet 1 of 1</span>
        <span className="h-[19px] w-[227px] border-l border-white" />
        <span className="w-[71px] border-l border-white pl-[10px]">Default</span>
        <span className="w-[110px] border-l border-white pl-[10px]">English (USA)</span>
        <span className="h-[19px] w-[84px] border-l border-white" />
        <span className="flex h-[19px] w-9 items-center justify-center border-l border-white">
          <Icon size="w-[22px] h-[14px]" box="0 0 22 14">
            <path d="M1 4h11v7H1z" stroke="#2d7ec0" strokeWidth="1.300" />
            <path d="M15 1h6M18 1v12M15 13h6" stroke={INK} strokeWidth="1.200" />
          </Icon>
        </span>
        <span className="flex h-[19px] w-9 items-center border-l border-white pl-[11px]">
          <Icon size="size-[13px]" box="0 0 13 13">
            <path d="M.7.700h11.600v11.600H2.500L.7 10.500z" fill="#e4e4e4" stroke={INK} strokeWidth="1.300" />
            <path d="M3.500 1v4h6V1M4 12V8.500h5.500V12" stroke={INK} strokeWidth="1.300" />
          </Icon>
        </span>
        <span className="h-[19px] w-[35px] border-l border-white" />
        <span className="flex-1 border-l border-white pr-1 text-center">Average: ; Sum: 0</span>
        <span className="flex h-[19px] items-center border-l border-white pl-[10px]">
          <button aria-label="Zoom Out">
            <Icon size="size-3" box="0 0 12 12">
              <path d="M0 6h12" stroke={INK} strokeWidth="2" />
            </Icon>
          </button>
          <input
            type="range"
            aria-label="Zoom"
            defaultValue={50}
            className="mx-[6px] h-3 w-[120px] appearance-none bg-transparent [&::-webkit-slider-runnable-track]:h-[2px] [&::-webkit-slider-runnable-track]:bg-[#222] [&::-webkit-slider-thumb]:-mt-[5px] [&::-webkit-slider-thumb]:h-3 [&::-webkit-slider-thumb]:w-[5px] [&::-webkit-slider-thumb]:appearance-none [&::-webkit-slider-thumb]:border [&::-webkit-slider-thumb]:border-[#222] [&::-webkit-slider-thumb]:bg-[#e0e0e0]"
          />
          <button aria-label="Zoom In">
            <Icon size="size-3" box="0 0 12 12">
              <path d="M0 6h12M6 0v12" stroke={INK} strokeWidth="2" />
            </Icon>
          </button>
        </span>
        <span className="ml-[10px] w-[59px] border-l border-white pl-[7px]">100%</span>
      </footer>
    </div>
  );
}

/* ---------- Taskbar ---------- */

function FirefoxIcon({ size }: { size: string }) {
  return (
    <Icon size={size} box="0 0 64 66">
      <defs>
        <linearGradient id="ffBody" x1="54" y1="6" x2="10" y2="62" gradientUnits="userSpaceOnUse">
          <stop offset="0" stopColor="#fff44f" />
          <stop offset=".4" stopColor="#ff980e" />
          <stop offset=".7" stopColor="#ff3647" />
          <stop offset="1" stopColor="#e31587" />
        </linearGradient>
        <radialGradient id="ffGlobe" cx=".5" cy=".3" r=".7">
          <stop offset="0" stopColor="#a238f0" />
          <stop offset="1" stopColor="#4a3fb8" />
        </radialGradient>
        <linearGradient id="ffFlame" x1="44" y1="2" x2="54" y2="60" gradientUnits="userSpaceOnUse">
          <stop offset="0" stopColor="#fff44f" />
          <stop offset=".5" stopColor="#ffc930" />
          <stop offset="1" stopColor="#ff7a22" stopOpacity="0" />
        </linearGradient>
      </defs>
      <path d="M6 14c1 2 2 4 3 5 1-4 4-7 7-9 0 4 1 7 3 9 3-2 8-2 11-1 0-7 4-14 11-18 1 8 7 12 12 16 3-1 8 8 10 20 3 18-12 30-31 30S-1 52 1 34c0-8 3-14 5-20" fill="url(#ffBody)" />
      <path d="M41 0c1 8 7 12 12 16 5 5 9 12 10 20 1 14-10 26-24 28 10-4 15-14 13-26-1-9-8-17-15-19-4 0-6-2-6-4 0-6 4-12 10-15" fill="url(#ffFlame)" />
      <circle cx="32" cy="35" r="14.500" fill="url(#ffGlobe)" />
      <path d="M30 21c5-3 13-1 15 4-4-2-7-2-10-1z" fill="#8a35e8" />
      <path d="M7 22c6-5 17-5 21 0 1 3 3 4 7 4 0 3-5 5-9 6-5 2-7 5-6 9 2 5 8 8 13 7 5 0 9-3 11-6-1 9-8 14-17 14-14 0-23-13-20-34" fill="#ff8a22" fillOpacity=".9" />
    </Icon>
  );
}

function SheetIcon({ size, color }: { size: string; color: string }) {
  return (
    <Icon size={size} box="0 0 60 74">
      <path d="M4 2h34l19 24v46H4z" fill="#fff" stroke={color} strokeWidth="5" strokeLinejoin="round" />
      <path d="M39 0h19a2 2 0 0 1 2 2v22z" fill={color} />
      <path d="M12 29h32v32H12zM12 35h32M12 41.500h32M12 48h32M12 54.500h32M22.500 29v32M33.500 29v32" stroke={color} strokeWidth="2.500" />
      <path d="M31 46h17v18H31z" fill="#fff" stroke={color} strokeWidth="1.500" />
      <path d="M35 62v-8" stroke="#2a7fd0" strokeWidth="3.500" />
      <path d="M40 62V49" stroke="#d93025" strokeWidth="3.500" />
      <path d="M45 62v-6" stroke="#333" strokeWidth="3" />
    </Icon>
  );
}

function Taskbar() {
  return (
    <footer className="flex h-[74px] shrink-0 items-center overflow-hidden bg-black pl-2 font-['DejaVu_Sans',sans-serif] text-[15px] leading-[18px] text-[#dedede]">
      <span className="w-[130px] shrink-0 text-base font-bold text-white">Workspace 1</span>
      <button className="flex w-[233px] shrink-0 items-center gap-1 text-left">
        <FirefoxIcon size="w-[66px] h-[68px]" />
        <span className="w-[140px]">Tesla, Inc. (TSLA) Options Chain - Yahoo Finance — Mozilla Firefox</span>
      </button>
      <button className="flex w-[238px] shrink-0 items-center gap-1 text-left">
        <Icon size="w-[68px] h-[68px]" box="0 0 68 68">
          <path d="M0 0h30v4h-6l10 20L46 4h-6V0h24v4h-6L38 32l20 32h9v4H37v-4h6L31 42 15 64h7v4H0v-4h7l20-31L9 4H0z" fill="#ff4a12" />
          <path d="M4 10h56l5 14h-3c-2-5-8-9-20-9v42c0 3 2 4 6 4v2H20v-2c4 0 6-1 6-4V15C14 15 7 19 5 24H1z" fill="#1c10ee" />
        </Icon>
        <span>computeruse@78bc-<br />9678d5a5: /tmp</span>
      </button>
      <button className="flex shrink-0 items-center gap-[9px] text-left">
        <SheetIcon size="w-[60px] h-[74px]" color="#1f8a3f" />
        <span>tsla_options_10_25.<br />csv - LibreOffice Calc</span>
      </button>
      <div className="ml-auto flex shrink-0 items-center gap-2 pr-2">
        <button aria-label="LibreOffice Calc" className="mr-1">
          <SheetIcon size="w-[44px] h-[54px]" color="#35b235" />
        </button>
        <button aria-label="Terminal">
          <Icon size="w-[52px] h-[44px]" box="0 0 52 44">
            <rect x="1" y="1" width="50" height="42" rx="2" fill="#2e3133" stroke="#c9c9c9" strokeWidth="3" />
            <path d="M4 4h44v17H4z" fill="#45494b" />
            <path d="m10 14 7 5.500-7 5.500" stroke="#fff" strokeWidth="2.500" />
            <path d="M19 29h9" stroke="#fff" strokeWidth="2.500" />
          </Icon>
        </button>
        <button aria-label="Firefox">
          <FirefoxIcon size="w-[51px] h-[52px]" />
        </button>
        <button aria-label="Paint">
          <Icon size="w-[52px] h-[54px]" box="0 0 52 54">
            <path d="m2 21 40-9 8 28-38 11z" fill="#f6f6f6" />
            <path d="m6 23 33-7 7 21-32 9z" fill="#2f7fd0" />
            <path d="m7 27 12-3 8-2 4 6-20 5z" fill="#bfe0f7" />
            <path d="m8 35 16-3 10 2 11 2-31 10z" fill="#1f9a86" />
            <circle cx="11" cy="30" r="6" fill="#b5b5b5" />
            <path d="M44 1 31 34l-5-2L42 1z" fill="#e3cf8a" />
            <path d="M1 40h24c0 8-4 13-12 13S1 48 1 40" fill="#f4b51c" />
            <ellipse cx="13" cy="40" rx="12" ry="5" fill="#fff1a0" stroke="#e8a814" strokeWidth="1.500" />
          </Icon>
        </button>
        <button aria-label="Xpdf" className="ml-[4px]">
          <Icon size="w-[44px] h-[44px]" box="0 0 44 44">
            <path d="M5 1h6l31 42h-6zM34 1h6L9 43H2z" fill="#ee0b0b" />
            <Glyph x={6} y={27} size={20} color="#fff">pdf</Glyph>
          </Icon>
        </button>
        <button aria-label="Text Editor">
          <Icon size="w-[54px] h-[54px]" box="0 0 54 54">
            <path d="M24 3H4a1 1 0 0 0-1 1v46a1 1 0 0 0 1 1h35a1 1 0 0 0 1-1V26M24 3l8 8" stroke="#454545" strokeWidth="5" />
            <path d="M17 39 20 30 41 9l6 6-21 21zM44 6l3-3 6 6-3 3z" fill="#4d4d4d" />
          </Icon>
        </button>
        <button aria-label="Calculator">
          <Icon size="w-[51px] h-[52px]" box="0 0 51 52">
            <rect x="2" y="2" width="47" height="48" rx="4" fill="#10233f" stroke="#3c70b4" strokeWidth="4" />
            <rect x="8" y="8" width="35" height="11" rx="2" stroke="#3c70b4" strokeWidth="2" fill="#0a0f18" />
            {[24, 32.5, 41].map((y) =>
              [8, 17.5, 27].map((x) => (
                <rect key={`${x}-${y}`} x={x} y={y} width="6" height="5" rx="1.500" stroke="#3c70b4" strokeWidth="1.800" />
              )),
            )}
            <rect x="36.500" y="24" width="6" height="5" rx="1.500" stroke="#3c70b4" strokeWidth="1.800" />
            <rect x="36.500" y="32.500" width="6" height="13.500" rx="1.500" stroke="#3c70b4" strokeWidth="1.800" />
          </Icon>
        </button>
      </div>
    </footer>
  );
}

export default function App() {
  return (
    <div className="flex h-screen flex-col overflow-hidden bg-white">
      <BrowserChrome />
      <main className="flex min-h-0 flex-1">
        <ChatPane />
        <div className="relative flex min-w-0 flex-1 bg-[#1b1b1b] pl-[10px] pr-2">
          <div className="flex min-w-0 flex-1 flex-col">
            <Calc />
            <Taskbar />
          </div>
          <button
            aria-label="Show controls"
            className="absolute left-0 top-[399px] flex h-[64px] w-[20px] items-center justify-center rounded-r-[9px] bg-[#4a5977] shadow-[2px_3px_2px_#55555599]"
          >
            <Icon size="w-4 h-[54px]" box="0 0 16 54">
              {[3, 9, 15, 39, 45, 51].map((y) => (
                <path key={y} d={`M3 ${y}h2M11 ${y}h2`} stroke="#7f8ca6" strokeWidth="2" />
              ))}
              <path d="M4 22v10l7-5z" fill="#fff" />
            </Icon>
          </button>
        </div>
      </main>
    </div>
  );
}
